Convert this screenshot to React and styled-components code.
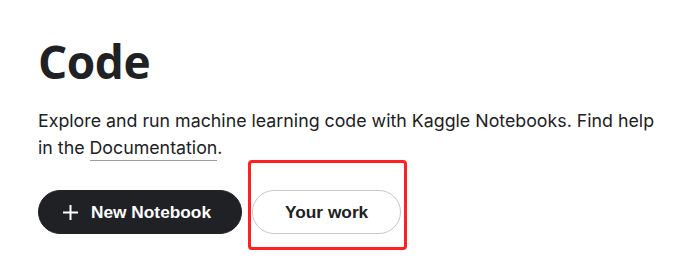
import React from "react"
import styled, { createGlobalStyle } from "styled-components"

const GlobalStyle = createGlobalStyle`
  html, body {
    margin: 0;
    padding: 0;
    background: #ffffff;
  }
`

const Page = styled.div`
  position: relative;
  width: 690px;
  height: 262px;
  padding: 0 20px 0 38px;
  box-sizing: border-box;
  color: #202124;
  overflow: hidden;
`

const Title = styled.h1`
  margin: 0;
  padding-top: 30px;
  font-family: "Open Sans", "Noto Sans", sans-serif;
  font-weight: 700;
  font-size: 46px;
  line-height: 62px;
  letter-spacing: -0.5px;
`

const Intro = styled.p`
  margin: 15px 0 0;
  max-width: 625px;
  font-family: Inter, "Noto Sans", sans-serif;
  font-size: 17.8px;
  line-height: 27px;
  color: #202124;
`

const DocLink = styled.a`
  color: inherit;
  text-decoration: none;
  border-bottom: 1px solid #9aa0a6;
  padding-bottom: 2px;
`

const Actions = styled.div`
  display: flex;
  gap: 10px;
  margin-top: 29px;
`

const Button = styled.button`
  display: inline-flex;
  align-items: center;
  gap: 13px;
  height: 44px;
  box-sizing: border-box;
  padding: ${p => (p.$primary ? "0 30px 0 24px" : "0 32px")};
  border-radius: 22px;
  border: 1px solid ${p => (p.$primary ? "#202124" : "#c6c8cc")};
  background: ${p => (p.$primary ? "#202124" : "#ffffff")};
  color: ${p => (p.$primary ? "#ffffff" : "#202124")};
  font-family: "Liberation Sans", Arial, sans-serif;
  font-weight: 700;
  font-size: 17.3px;
  cursor: pointer;
`

const Highlight = styled.div`
  position: absolute;
  left: 248px;
  top: 160px;
  width: 159px;
  height: 90px;
  box-sizing: border-box;
  border: 3px solid #ff2020;
  border-radius: 4px;
  pointer-events: none;
`

const PlusIcon = () => (
  <svg width="15" height="15" viewBox="0 0 15 15" fill="none">
    <path d="M7.5 0v15M0 7.5h15" stroke="#ffffff" strokeWidth="2" />
  </svg>
)

export default function App() {
  return (
    <>
      <GlobalStyle />
      <Page>
        <Title>Code</Title>
        <Intro>
          Explore and run machine learning code with Kaggle Notebooks. Find help
          in the <DocLink href="#">Documentation</DocLink>.
        </Intro>
        <Actions>
          <Button $primary>
            <PlusIcon />
            New Notebook
          </Button>
          <Button>Your work</Button>
        </Actions>
        <Highlight />
      </Page>
    </>
  )
}
